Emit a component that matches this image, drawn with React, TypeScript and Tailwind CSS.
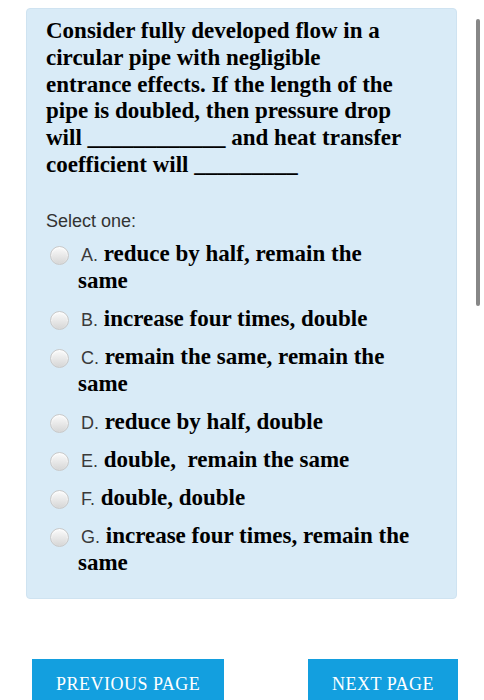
const options = [
  { key: "A", lines: ["reduce by half, remain the", "same"] },
  { key: "B", lines: ["increase four times, double"] },
  { key: "C", lines: ["remain the same, remain the", "same"] },
  { key: "D", lines: ["reduce by half, double"] },
  { key: "E", lines: ["double,\u00a0 remain the same"] },
  { key: "F", lines: ["double, double"] },
  { key: "G", lines: ["increase four times, remain the", "same"] },
];

function Radio() {
  return (
    <span className="mt-[6px] block h-[19px] w-[19px] shrink-0 rounded-full border border-[#c9c9c9] bg-gradient-to-b from-[#fbfbfb] to-[#d6d6d6] shadow-[inset_0_1px_2px_rgba(255,255,255,0.9)]" />
  );
}

export default function App() {
  return (
    <div className="relative min-h-[700px] bg-white pt-[8px]">
      {/* mobile scrollbar */}
      <div className="absolute left-[476px] top-[19px] h-[287px] w-[4px] rounded-full bg-[#878787]" />

      <div className="ml-[26px] w-[431px] rounded-[4px] border border-[#cfe3f1] bg-[#d9ebf7] pb-[22px] pl-[19px] pr-[19px] pt-[9px]">
        <p className="font-['Liberation_Serif',serif] text-[23px] font-bold leading-[26.8px] text-black">
          Consider fully developed flow in a<br />
          circular pipe with negligible<br />
          entrance effects. If the length of the<br />
          pipe is doubled, then pressure drop<br />
          will ____________ and heat transfer<br />
          coefficient will _________
        </p>

        <div className="mt-[30px] font-['Liberation_Sans',sans-serif] text-[18px] leading-[24px] text-[#333]">
          Select one:
        </div>

        <div className="mt-[7px] flex flex-col gap-[11px]">
          {options.map((o) => (
            <div key={o.key} className="flex pl-[4px]">
              <Radio />
              <div className="ml-[9px] font-['Liberation_Serif',serif] text-[23px] font-bold leading-[27px] text-black">
                <span className="ml-[3px] font-['Liberation_Sans',sans-serif] text-[18px] font-normal leading-[18px] text-[#3a3a3a]">
                  {o.key}.
                </span>{" "}
                {o.lines.map((l, i) => (
                  <span key={i}>
                    {i > 0 && <br />}
                    {l}
                  </span>
                ))}
              </div>
            </div>
          ))}
        </div>
      </div>

      <div className="ml-[32px] mt-[60px] flex w-[426px] justify-between font-['Liberation_Serif',serif] text-[18px] leading-[24px] tracking-[0.5px] text-white">
        <button className="bg-[#139fdf] px-[24px] pb-[13px] pt-[13px]">PREVIOUS PAGE</button>
        <button className="bg-[#139fdf] px-[24px] pb-[13px] pt-[13px]">NEXT PAGE</button>
      </div>
    </div>
  );
}
